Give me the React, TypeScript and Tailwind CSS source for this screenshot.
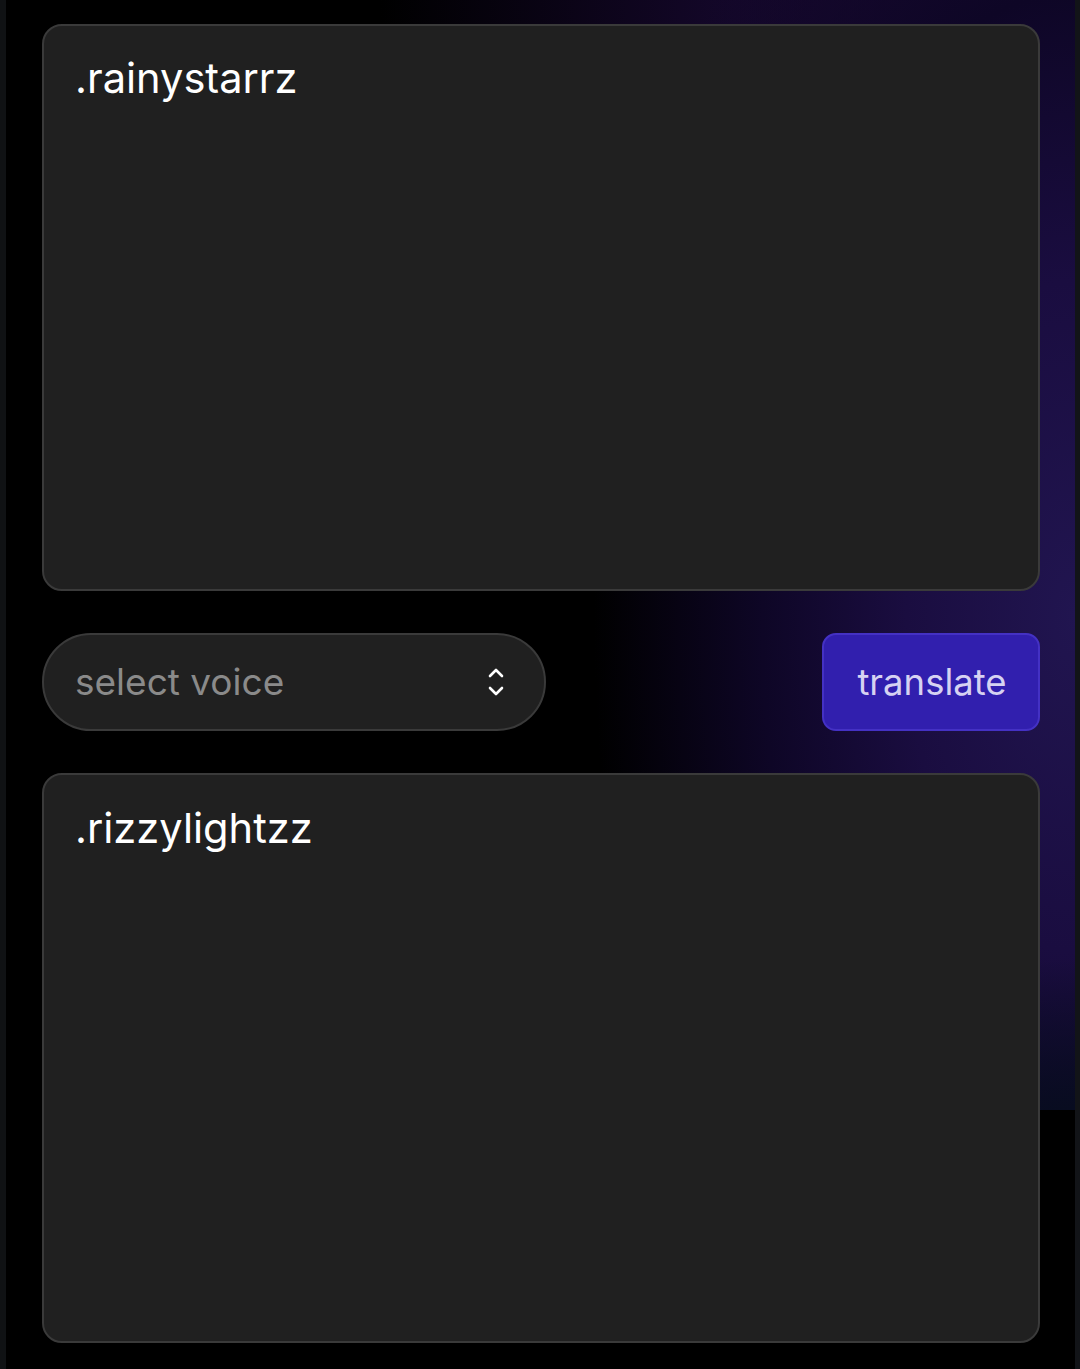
import React from "react";

function ChevronUpDown() {
  return (
    <svg width="20" height="32" viewBox="0 0 20 32" fill="none" stroke="#ffffff" strokeWidth="2.6" strokeLinecap="round" strokeLinejoin="round">
      <path d="M4 10 L10 4 L16 10" />
      <path d="M4 22 L10 28 L16 22" />
    </svg>
  );
}

export default function App() {
  return (
    <div
      className="w-[1080px] h-[1369px] bg-black flex"
      style={{ fontFamily: "Inter, 'Noto Sans', sans-serif" }}
    >
      <div className="w-[6px] bg-[#101214] shrink-0" />
      <div className="flex-1 flex flex-col bg-[linear-gradient(to_bottom,transparent_1110px,#000_1110px),radial-gradient(ellipse_25%_22%_at_100%_92%,#0a1128_0%,#080c20_50%,transparent_100%),radial-gradient(ellipse_45%_70%_at_100%_45%,#211550_0%,#1a0d40_35%,#0e0626_65%,transparent_100%),radial-gradient(ellipse_60%_40%_at_95%_0%,#1e0a35_0%,#14072a_45%,transparent_100%)] pl-[36px] pr-[35px] pt-[24px]">
        <div className="h-[567px] shrink-0 rounded-[20px] border-2 border-[#3a3a3a] bg-[#202020] pl-[31px] pt-[26px]">
          <div className="text-[41.6px] leading-[52px] text-white">.rainystarrz</div>
        </div>
        <div className="mt-[42px] flex items-center justify-between shrink-0">
          <div className="w-[504px] h-[98px] rounded-full border-2 border-[#3a3a3a] bg-[#202020] flex items-center justify-between pl-[31px] pr-[38px]">
            <span className="text-[37px] text-[#8a8a8a]">select voice</span>
            <ChevronUpDown />
          </div>
          <div className="w-[218px] h-[98px] rounded-[14px] border-2 border-[#4431c4] bg-[#311fae] flex items-center justify-center pl-[2px]">
            <span className="text-[36.5px] text-[#d6d2f2]">translate</span>
          </div>
        </div>
        <div className="mt-[42px] h-[570px] rounded-[20px] border-2 border-[#3a3a3a] bg-[#202020] pl-[31px] pt-[27px] shrink-0">
          <div className="text-[41.6px] leading-[52px] text-white">.rizzylightzz</div>
        </div>
      </div>
      <div className="w-[5px] bg-[#121418] shrink-0" />
    </div>
  );
}
